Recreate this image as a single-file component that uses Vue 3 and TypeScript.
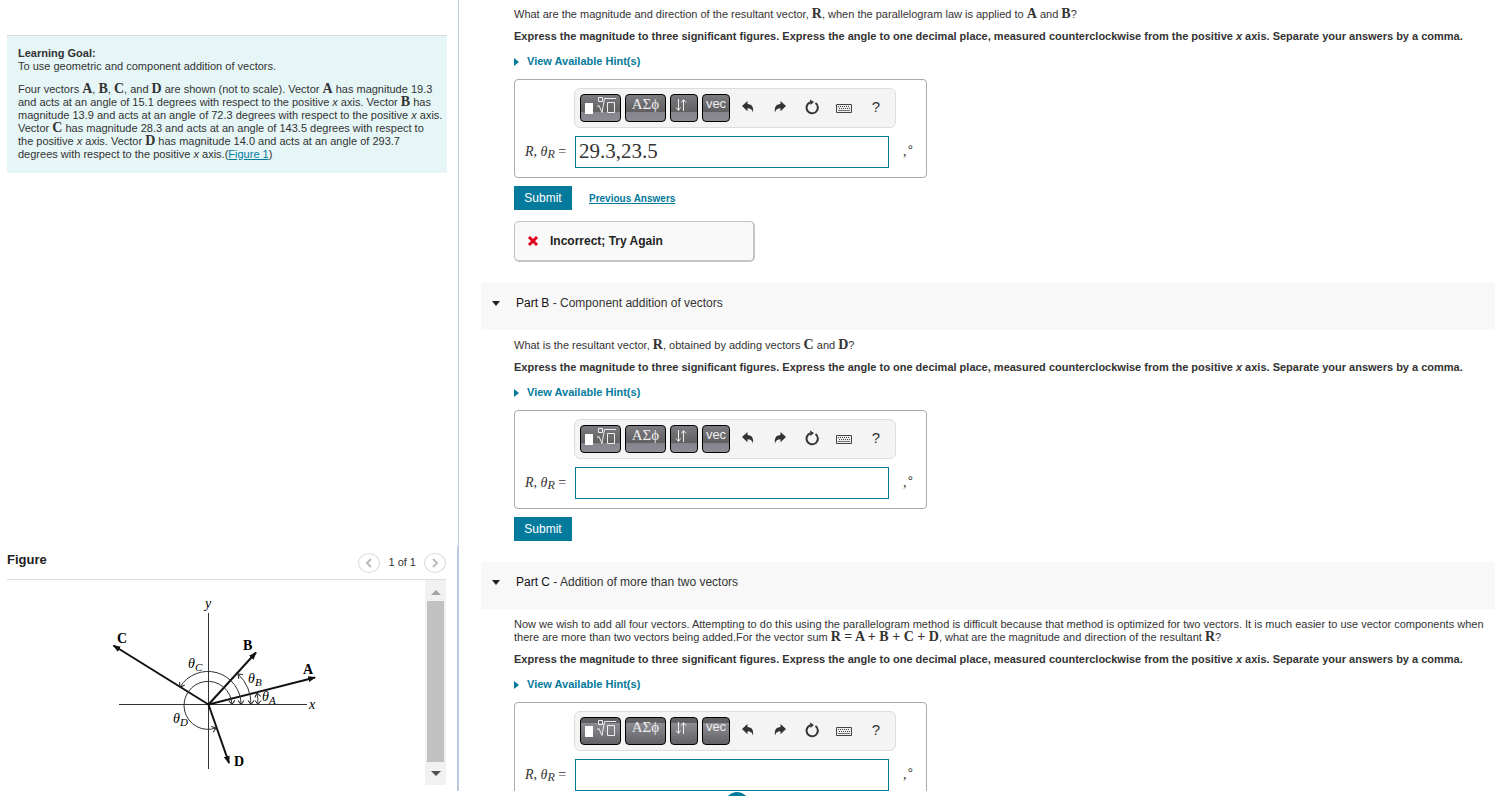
<script setup lang="ts">
import { ref } from 'vue'

type Kind = 'text' | 'vec' | 'var' | 'br'
interface Segment {
  kind: Kind
  value: string
}
interface Part {
  id: string
  title: string
  topic: string
  question: Segment[]
  answer: string
  attempted: boolean
  submittable: boolean
}

const t = (value: string): Segment => ({ kind: 'text', value })
const v = (value: string): Segment => ({ kind: 'vec', value })
const i = (value: string): Segment => ({ kind: 'var', value })
const br: Segment = { kind: 'br', value: '' }

const goal: Segment[] = [
  t('Four vectors '), v('A'), t(', '), v('B'), t(', '), v('C'), t(', and '), v('D'),
  t(' are shown (not to scale). Vector '), v('A'), t(' has magnitude 19.3'), br,
  t('and acts at an angle of 15.1 degrees with respect to the positive '), i('x'), t(' axis. Vector '), v('B'), t(' has'), br,
  t('magnitude 13.9 and acts at an angle of 72.3 degrees with respect to the positive '), i('x'), t(' axis.'), br,
  t('Vector '), v('C'), t(' has magnitude 28.3 and acts at an angle of 143.5 degrees with respect to'), br,
  t('the positive '), i('x'), t(' axis. Vector '), v('D'), t(' has magnitude 14.0 and acts at an angle of 293.7'), br,
  t('degrees with respect to the positive '), i('x'), t(' axis.'),
]

const parts = ref<Part[]>([
  {
    id: 'a',
    title: '',
    topic: '',
    question: [
      t('What are the magnitude and direction of the resultant vector, '), v('R'),
      t(', when the parallelogram law is applied to '), v('A'), t(' and '), v('B'), t('?'),
    ],
    answer: '29.3,23.5',
    attempted: true,
    submittable: true,
  },
  {
    id: 'b',
    title: 'Part B',
    topic: 'Component addition of vectors',
    question: [
      t('What is the resultant vector, '), v('R'), t(', obtained by adding vectors '), v('C'), t(' and '), v('D'), t('?'),
    ],
    answer: '',
    attempted: false,
    submittable: true,
  },
  {
    id: 'c',
    title: 'Part C',
    topic: 'Addition of more than two vectors',
    question: [
      t('Now we wish to add all four vectors. Attempting to do this using the parallelogram method is difficult because that method is optimized for two vectors. It is much easier to use vector components when'), br,
      t('there are more than two vectors being added.For the vector sum '), v('R = A + B + C + D'),
      t(', what are the magnitude and direction of the resultant '), v('R'), t('?'),
    ],
    answer: '',
    attempted: false,
    submittable: false,
  },
])
</script>

<template>
  <div class="page">
    <div class="panes">
      <aside class="left">
        <section class="intro">
          <div class="goal">
            <h2>Learning Goal:</h2>
            <p>To use geometric and component addition of vectors.</p>
            <p class="goal-body">
              <template v-for="(s, n) in goal" :key="n"><b v-if="s.kind === 'vec'" class="vec">{{ s.value }}</b><i v-else-if="s.kind === 'var'">{{ s.value }}</i><br v-else-if="s.kind === 'br'"><template v-else>{{ s.value }}</template></template>(<a href="#figure">Figure 1</a>)
            </p>
          </div>
        </section>

        <section id="figure" class="figure">
          <header class="figure-head">
            <h2>Figure</h2>
            <nav class="pager">
              <button type="button" aria-label="Previous figure">
                <svg width="8" height="10" viewBox="0 0 8 10"><path d="M6 1 2 5l4 4" /></svg>
              </button>
              <span>1 of 1</span>
              <button type="button" aria-label="Next figure">
                <svg width="8" height="10" viewBox="0 0 8 10"><path d="m2 1 4 4-4 4" /></svg>
              </button>
            </nav>
          </header>
          <div class="figure-body">
            <svg class="diagram" width="230" height="190" viewBox="100 590 230 190">
              <defs>
                <marker id="tip" viewBox="0 0 8 6" refX="7" refY="3" markerWidth="8" markerHeight="6" markerUnits="userSpaceOnUse" orient="auto">
                  <path d="M0 0 8 3 0 6z" fill="#111" />
                </marker>
                <marker id="open" viewBox="0 0 6 8" refX="5" refY="4" markerWidth="6" markerHeight="8" markerUnits="userSpaceOnUse" orient="auto-start-reverse">
                  <path d="M1 1 5 4 1 7" fill="none" stroke="#222" />
                </marker>
              </defs>
              <g class="axes">
                <path d="M208.5 613V769" />
                <path d="M119 704.5H307" />
              </g>
              <g class="vectors">
                <path d="M208.5 704.5 315 677.500" />
                <path d="M208.5 704.5 256 652.500" />
                <path d="M208.5 704.5 113.500 645.500" />
                <path d="M208.5 704.5 229 763" />
              </g>
              <g class="arcs">
                <path d="M257 693Q258 698 258 704.500" />
                <path d="M238 674A42 42 0 0 1 251 704.500" />
                <path d="M180 687A33 33 0 0 1 241 704.500" />
                <path d="M216 728A24 24 0 1 1 232 704.500" />
              </g>
              <g class="names">
                <text x="117" y="643">C</text>
                <text x="243" y="650">B</text>
                <text x="303" y="674">A</text>
                <text x="234" y="766">D</text>
              </g>
              <g class="angles">
                <text x="205" y="608">y</text>
                <text x="309" y="709">x</text>
                <text x="188" y="668">θ<tspan class="sub" dy="3">C</tspan></text>
                <text x="248" y="683">θ<tspan class="sub" dy="3">B</tspan></text>
                <text x="262" y="701">θ<tspan class="sub" dy="3">A</tspan></text>
                <text x="173" y="723">θ<tspan class="sub" dy="3">D</tspan></text>
              </g>
            </svg>
            <div class="scrollbar" aria-hidden="true">
              <span class="arrow up"></span>
              <span class="thumb"></span>
              <span class="arrow down"></span>
            </div>
          </div>
        </section>
      </aside>

      <main class="right">
        <section v-for="part in parts" :key="part.id" class="part">
          <header v-if="part.title" class="part-head">
            <button type="button" class="toggle" :aria-label="'Collapse ' + part.title"></button>
            <h2><span>{{ part.title }}</span> - {{ part.topic }}</h2>
          </header>
          <div class="part-body">
            <p>
              <template v-for="(s, n) in part.question" :key="n"><b v-if="s.kind === 'vec'" class="vec">{{ s.value }}</b><br v-else-if="s.kind === 'br'"><template v-else>{{ s.value }}</template></template>
            </p>
            <p class="instruction">Express the magnitude to three significant figures. Express the angle to one decimal place, measured counterclockwise from the positive <i>x</i> axis. Separate your answers by a comma.</p>
            <a class="hints" href="#hints">View Available Hint(s)</a>

            <form class="answer" @submit.prevent>
              <div class="toolbar" :class="{ late: part.id === 'c' }">
                <button type="button" class="key wide" aria-label="Templates">
                  <svg width="39" height="26" viewBox="0 0 39 26">
                    <path d="M4 8h8v11H4z" fill="#fff" />
                    <path d="M17.500 2.500h4v4h-4zM16 11.500l2-1 3 7L23.500 3.500H35M26.500 7.500h7v10h-7z" fill="none" stroke="#eee" />
                  </svg>
                </button>
                <button type="button" class="key wide greek">ΑΣϕ</button>
                <button type="button" class="key" aria-label="Subscript and superscript">
                  <svg width="26" height="26" viewBox="0 0 26 26">
                    <path d="M7.500 4v11M5 12.500l2.500 3 2-3M12.500 16V5M10.500 7.500l2-3 2.500 3" fill="none" stroke="#eee" />
                  </svg>
                </button>
                <button type="button" class="key last">vec</button>
                <button type="button" class="tool" aria-label="Undo">
                  <svg width="16" height="16" viewBox="0 0 16 16"><path d="M2 7 7.500 2v3C12 5.200 13.800 8 13 13.500 12 10.500 10.800 9.200 7.500 9.200v3z" /></svg>
                </button>
                <button type="button" class="tool" aria-label="Redo">
                  <svg width="16" height="16" viewBox="0 0 16 16"><path d="M14 7 8.500 2v3C4 5.200 2.200 8 3 13.500 4 10.500 5.200 9.200 8.500 9.200v3z" /></svg>
                </button>
                <button type="button" class="tool" aria-label="Reset">
                  <svg width="16" height="16" viewBox="0 0 16 16">
                    <path d="M11.500 4A5.700 5.700 0 1 1 6.500 3.200" fill="none" stroke="#333" stroke-width="2" />
                    <path d="M6 .5 10 3 6.500 6z" />
                  </svg>
                </button>
                <button type="button" class="tool" aria-label="Keyboard shortcuts">
                  <svg width="16" height="16" viewBox="0 0 16 16">
                    <path d="M.5 5.500h15v8H.5z" fill="#eee" stroke="#444" />
                    <path d="M2 7.500h12M3 9.500h11" stroke="#444" stroke-dasharray="1 1" />
                    <path d="M2 11.500h12" stroke="#777" />
                  </svg>
                </button>
                <button type="button" class="tool help">?</button>
              </div>
              <div class="row">
                <label :for="'answer-' + part.id"><i>R</i>, <i>θ</i><sub>R</sub> =</label>
                <input :id="'answer-' + part.id" v-model="part.answer" type="text" autocomplete="off">
                <span class="unit">,<sup>∘</sup></span>
              </div>
            </form>

            <div v-if="part.submittable" class="actions">
              <button type="button" class="submit">Submit</button>
              <a v-if="part.attempted" href="#previous">Previous Answers</a>
            </div>
            <div v-if="part.attempted" class="feedback" role="status">
              <svg width="12" height="12" viewBox="0 0 12 12"><path d="M2 2l8 8M10 2l-8 8" stroke="#e1001a" stroke-width="3" /></svg>
              <strong>Incorrect; Try Again</strong>
            </div>
          </div>
        </section>
      </main>
    </div>
    <footer class="bottom"><span class="bubble"></span></footer>
  </div>
</template>

<style>
body {
  margin: 0;
  background: #fff;
}
</style>

<style scoped>
.page {
  display: flex;
  flex-direction: column;
  height: 100vh;
  overflow: hidden;
  font: 11px/13px "Liberation Sans", Arial, sans-serif;
  color: #333;
}
h2,
p {
  margin: 0;
}
button {
  font-family: inherit;
  padding: 0;
}
a {
  color: #047a9c;
}
.panes {
  flex: 1;
  min-height: 0;
  display: flex;
}

.left {
  flex: none;
  width: 459px;
  display: flex;
  flex-direction: column;
}
.intro {
  flex: 1;
  padding: 35px 11px 0 7px;
  border-right: 1px solid #b8cce0;
}
.goal {
  padding: 11px 4px 12px 11px;
  border-top: 1px solid #d5dadb;
  background: #e6f6f7;
  white-space: nowrap;
}
.goal h2 {
  font-size: 11px;
}
.goal-body {
  margin-top: 10px;
}
.vec {
  font: bold 14px "Liberation Serif", serif;
  line-height: 0;
}

.figure {
  padding: 0 11px 6px 7px;
  border-right: 2px solid #b8cce0;
}
.figure-head {
  display: flex;
  justify-content: space-between;
  align-items: center;
  height: 33px;
  border-bottom: 1px solid #ddd;
}
.figure-head h2 {
  font-size: 13px;
  color: #222;
  padding-bottom: 7px;
}
.pager {
  display: flex;
  align-items: center;
  gap: 8px;
}
.pager button {
  display: grid;
  place-items: center;
  width: 22px;
  height: 20px;
  border: 1px solid #ddd;
  border-radius: 50%;
  background: #fff;
}
.pager path {
  fill: none;
  stroke: #bbb;
  stroke-width: 2;
}
.figure-body {
  display: flex;
  justify-content: space-between;
  height: 205px;
}
.diagram {
  margin: 10px 0 0 93px;
}
.axes path {
  stroke: #333;
}
.vectors path {
  stroke: #111;
  stroke-width: 2;
  marker-end: url(#tip);
}
.arcs path {
  fill: none;
  stroke: #333;
  marker-start: url(#open);
  marker-end: url(#open);
}
.names text {
  font: bold 14px "Liberation Serif", serif;
}
.angles text {
  font: italic 14px "Liberation Serif", serif;
}
.angles .sub {
  font-size: 11px;
}
.scrollbar {
  display: flex;
  flex-direction: column;
  align-items: center;
  justify-content: space-between;
  gap: 6px;
  width: 21px;
  padding: 10px 0 9px;
  box-sizing: border-box;
  background: #f1f1f1;
}
.arrow {
  border: 5px solid transparent;
}
.up {
  border-top: 0;
  border-bottom-color: #a3a3a3;
}
.down {
  border-bottom: 0;
  border-top-color: #505050;
}
.thumb {
  flex: 1;
  width: 17px;
  margin-bottom: 3px;
  background: #c1c1c1;
}

.right {
  flex: 1;
  min-width: 0;
  margin: 0 1px 0 22px;
  overflow: hidden;
}
.part-head {
  display: flex;
  align-items: center;
  gap: 16px;
  height: 47px;
  padding: 0 11px;
  background: #f8f8f8;
}
.part-head h2 {
  font-size: 12px;
  font-weight: normal;
  padding-bottom: 7px;
}
.part-head span {
  color: #111;
}
.toggle {
  width: 0;
  height: 0;
  border: 4px solid transparent;
  border-top: 5px solid #222;
  border-bottom: 0;
  margin-bottom: 7px;
  background: none;
}
.part-body {
  padding: 9px 10px 21px 33px;
}
.part:first-child .part-body {
  padding-top: 8px;
}
.instruction {
  margin-top: 9px;
  font-weight: bold;
}
.hints {
  display: flex;
  align-items: center;
  gap: 8px;
  width: max-content;
  margin: 12px 0 11px;
  font-weight: bold;
  text-decoration: none;
}
.hints::before {
  content: "";
  border: 4px solid transparent;
  border-left: 5px solid #047a9c;
  border-right: 0;
}
.answer {
  width: 413px;
  box-sizing: border-box;
  padding: 8px 9px 9px;
  border: 1px solid #aaa;
  border-radius: 4px;
}
.toolbar {
  display: flex;
  align-items: center;
  width: 322px;
  height: 40px;
  box-sizing: border-box;
  margin: 0 0 8px 50px;
  padding: 0 0 1px 5px;
  border: 1px solid #ddd;
  border-radius: 6px;
  background: #f4f4f4;
}
.key {
  width: 28px;
  height: 28px;
  margin-right: 4px;
  border: 1px solid #000;
  border-radius: 4px;
  background: linear-gradient(#7c7c80, #5f5f61 66%, #85848c 66%, #8d8c94);
  color: #eee;
  font-size: 13px;
  line-height: 16px;
  padding-bottom: 8px;
}
.late .key {
  background: linear-gradient(#606062 18%, #8e8d95 18%, #626264);
}
.key svg {
  display: block;
  margin-bottom: -8px;
}
.wide {
  width: 41px;
}
.greek {
  font: 15px/16px "Liberation Serif", serif;
}
.last {
  margin: 0 2px 0 0;
}
.tool {
  display: grid;
  place-items: center;
  width: 32px;
  height: 28px;
  padding-bottom: 2px;
  border: 0;
  background: none;
  color: #333;
  fill: #333;
}
.help {
  font-size: 15px;
}
.row {
  display: flex;
  align-items: center;
}
.row label {
  width: 51px;
  box-sizing: border-box;
  padding-left: 1px;
  white-space: nowrap;
  font: 14px/20px "Liberation Serif", serif;
}
.row sub {
  font-size: 12px;
  font-style: italic;
  line-height: 0;
  vertical-align: -2px;
}
.row input {
  width: 314px;
  height: 32px;
  box-sizing: border-box;
  padding: 0 3px 2px;
  border: 1px solid #047a9c;
  border-radius: 0;
  background: #fff;
  color: #333;
  font: 21px "Liberation Serif", serif;
}
.unit {
  margin-left: 14px;
  font: 14px/20px "Liberation Serif", serif;
}
.unit sup {
  font: 12px "DejaVu Sans", sans-serif;
  line-height: 0;
  vertical-align: 5px;
}
.actions {
  display: flex;
  align-items: center;
  gap: 17px;
  margin-top: 8px;
  font-size: 10px;
  font-weight: bold;
}
.submit {
  width: 58px;
  height: 24px;
  border: 0;
  background: #047a9c;
  color: #fff;
  font-size: 12px;
}
.feedback {
  display: flex;
  align-items: center;
  gap: 11px;
  width: 241px;
  height: 41px;
  box-sizing: border-box;
  margin-top: 11px;
  padding: 0 12px;
  border: 1px solid #c4c4c4;
  border-width: 1px 2px 2px 1px;
  border-radius: 5px;
  background: #f9f9f9;
  font-size: 12px;
  color: #222;
}
.bottom {
  position: relative;
  flex: none;
  height: 5px;
  overflow: hidden;
}
.bubble {
  position: absolute;
  top: 1px;
  left: 49%;
  width: 24px;
  height: 24px;
  margin-left: -8px;
  border-radius: 50%;
  background: #047a9c;
}
</style>
